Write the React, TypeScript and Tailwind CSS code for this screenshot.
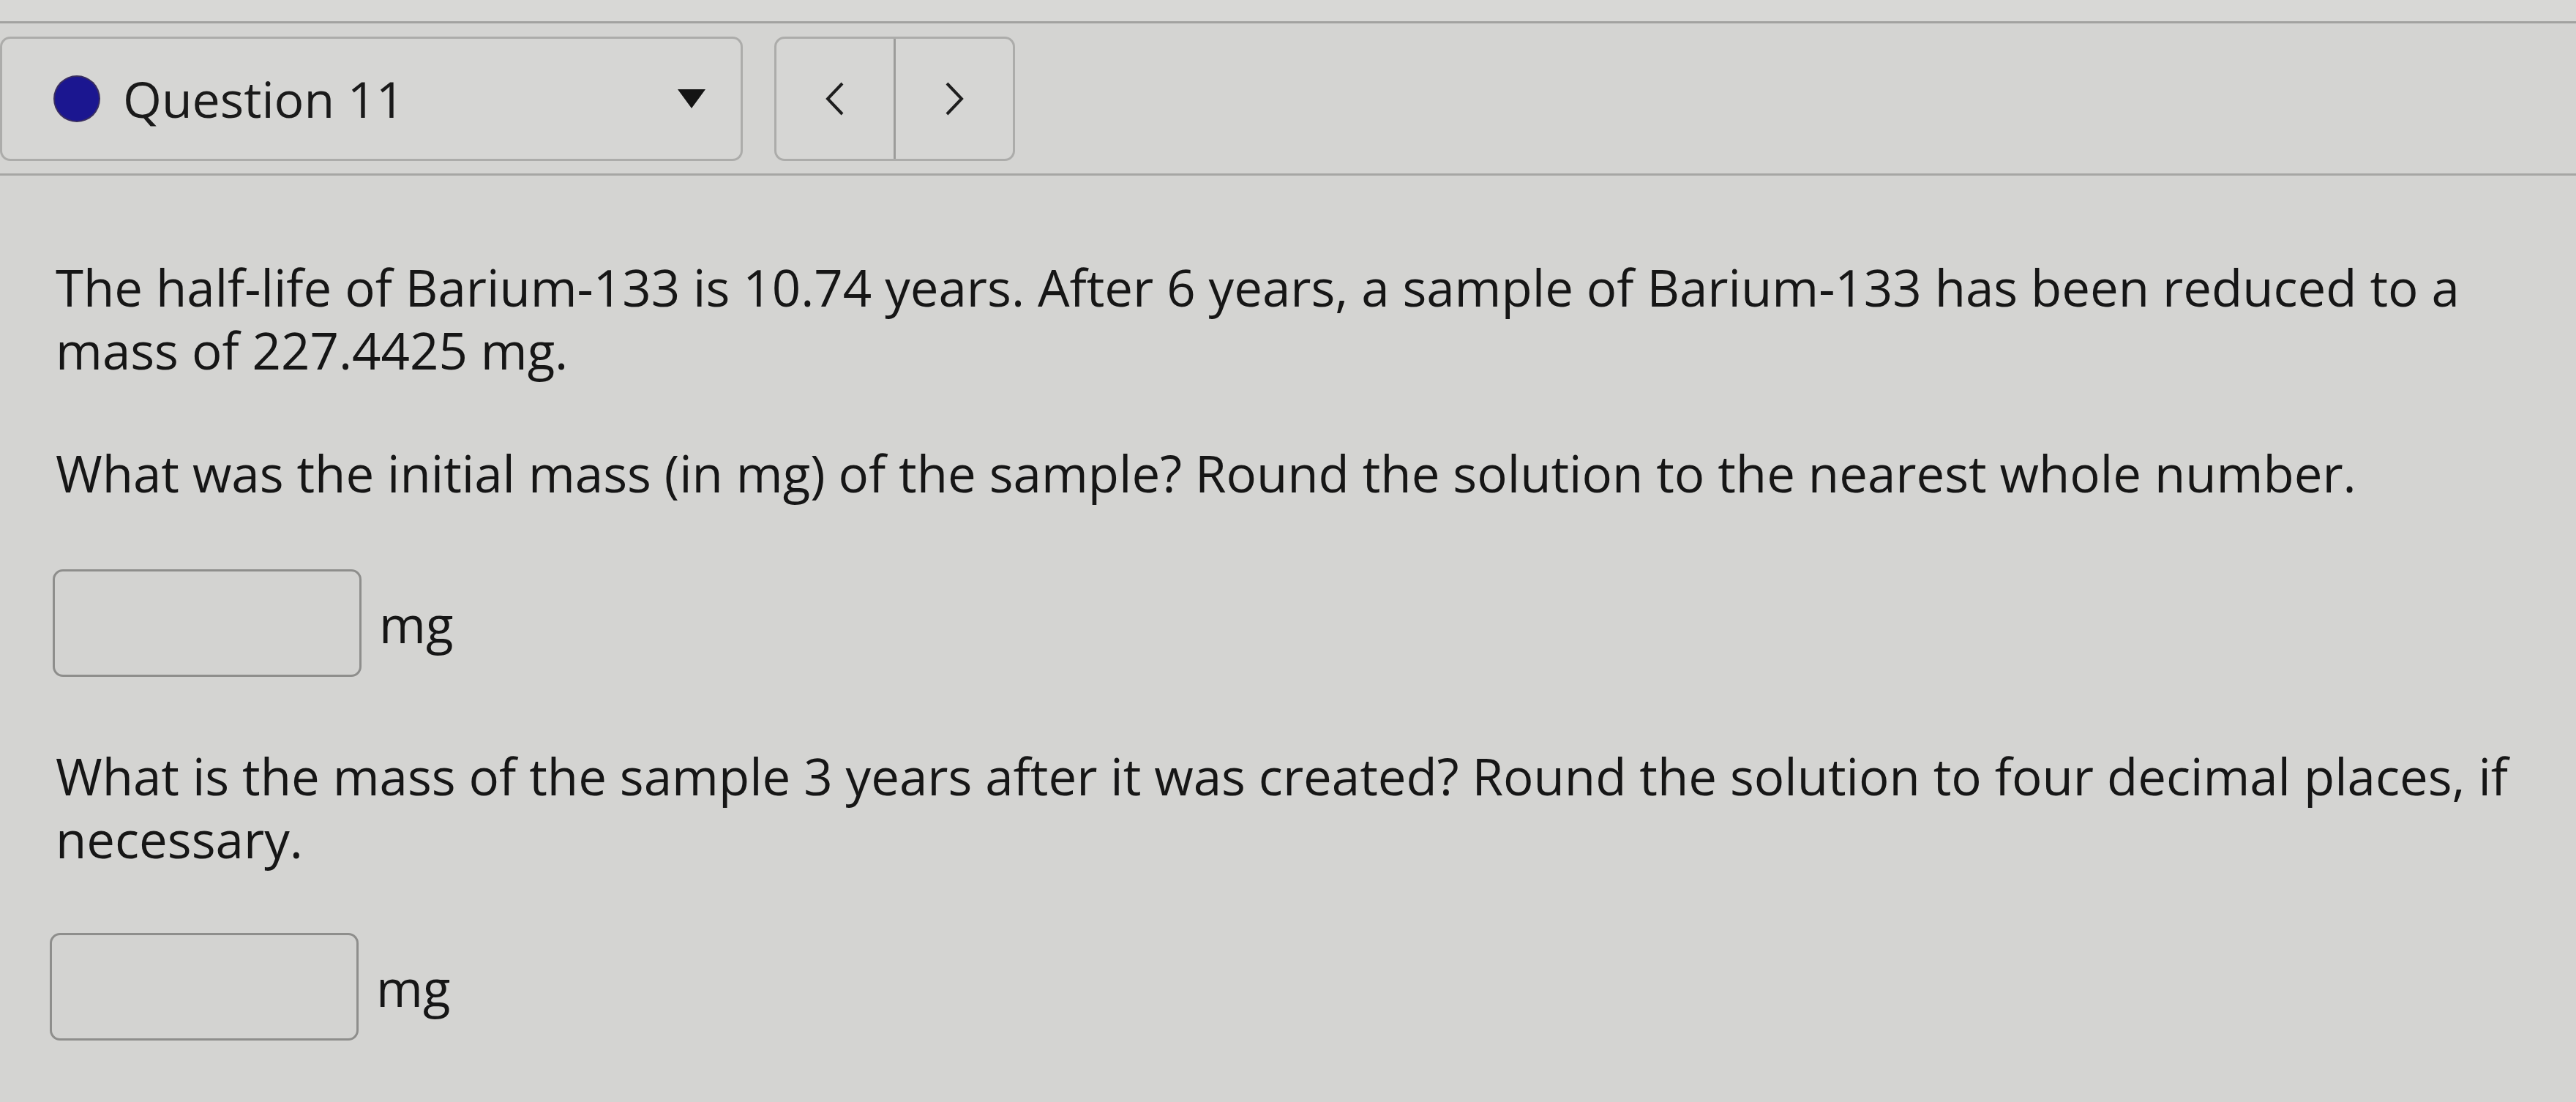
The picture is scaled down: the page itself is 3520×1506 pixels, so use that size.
import React from "react";

function Answer() {
  return (
    <div className="flex items-center">
      <div className="h-[147px] w-[422px] rounded-[14px] border-[3px] border-[#8e8e8c] bg-[#d3d3d1]" />
      <span className="ml-[24px] leading-[86px]">mg</span>
    </div>
  );
}

export default function App() {
  return (
    <div
      className="min-h-screen w-full bg-[#d4d4d2] text-[#161616]"
      style={{ fontFamily: '"Open Sans", "Noto Sans", sans-serif' }}
    >
      <div className="h-[32px] border-b-[3px] border-[#a2a2a0] bg-[#d8d8d6]" />
      <div className="flex h-[208px] items-center border-b-[3px] border-[#a6a6a4]">
        <div className="flex h-[170px] w-[1015px] items-center rounded-[14px] border-[3px] border-[#acacaa] bg-[#d6d6d4]">
          <div className="ml-[72px] h-[60px] w-[60px] rounded-full bg-[#1b1690] shadow-[0_0_0_2px_#3a2f60]" />
          <span className="ml-[33px] text-[68px] font-medium leading-[86px] text-[#1a1a1a]">Question 11</span>
          <svg className="ml-auto mr-[48px]" width="38" height="26" viewBox="0 0 38 26">
            <polygon points="0,0 38,0 19,26" fill="#141414" />
          </svg>
        </div>
        <div className="ml-[43px] flex h-[170px] w-[329px] rounded-[14px] border-[3px] border-[#acacaa] bg-[#d6d6d4]">
          <div className="flex flex-1 items-center justify-center border-r-[3px] border-[#9c9c9a]">
            <svg width="28" height="48" viewBox="0 0 28 48">
              <polyline points="24,3 4,24 24,45" fill="none" stroke="#1e1e1e" strokeWidth="4" />
            </svg>
          </div>
          <div className="flex flex-1 items-center justify-center">
            <svg width="28" height="48" viewBox="0 0 28 48">
              <polyline points="4,3 24,24 4,45" fill="none" stroke="#1e1e1e" strokeWidth="4" />
            </svg>
          </div>
        </div>
      </div>
      <div className="pl-[76px] pt-[109px] text-[69px] font-medium leading-[86px]">
        <p>
          The half-life of Barium-133 is 10.74 years. After 6 years, a sample of Barium-133 has been reduced to a
          <br />
          mass of 227.4425 mg.
        </p>
        <p className="mt-[82px]">
          What was the initial mass (in mg) of the sample? Round the solution to the nearest whole number.
        </p>
        <div className="mt-[89px] -ml-[4px]">
          <Answer />
        </div>
        <p className="mt-[92px]">
          What is the mass of the sample 3 years after it was created? Round the solution to four decimal places, if
          <br />
          necessary.
        </p>
        <div className="mt-[86px] -ml-[8px]">
          <Answer />
        </div>
      </div>
    </div>
  );
}
